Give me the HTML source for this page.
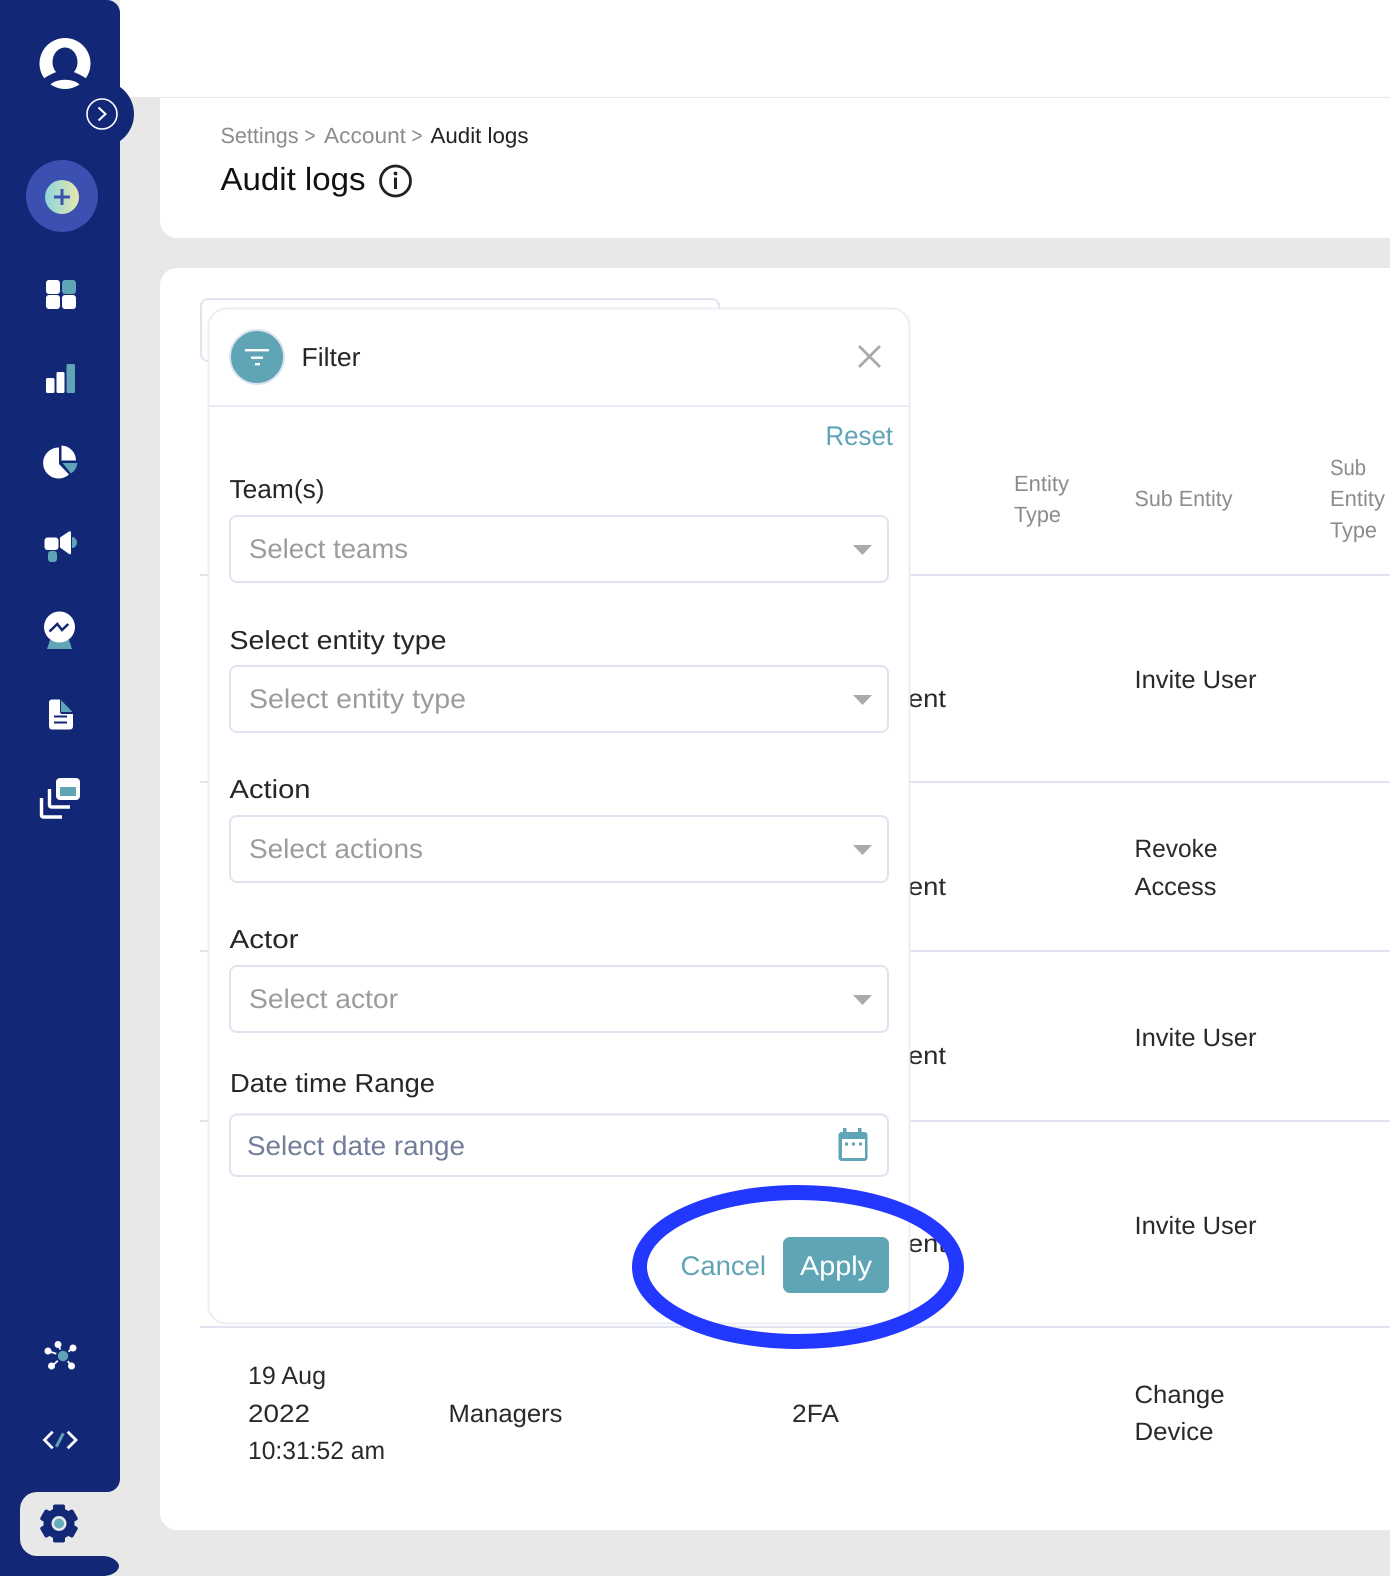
<!DOCTYPE html>
<html lang="en">
<head>
<meta charset="utf-8">
<title>Audit logs</title>
<style>
html,body{margin:0;padding:0;background:#e8e8e8;width:1390px;height:1576px;overflow:hidden}
svg{display:block}
text{font-family:"Liberation Sans",Arial,sans-serif;text-rendering:geometricPrecision}
.h{fill:#8c8c8c;font-size:22px}
.c{fill:#2a2a2a;font-size:25px}
.l{fill:#262626;font-size:26px}
.p{fill:#9c9c9c;font-size:27px}
.t{fill:#5fa5b6;font-size:27px}
.f{fill:none;stroke:#dfe3f0;stroke-width:2}
</style>
</head>
<body>
<svg width="1390" height="1576" viewBox="0 0 1390 1576" xmlns="http://www.w3.org/2000/svg">
<defs>
<linearGradient id="g" x1="0" x2="1" y1="0" y2="0"><stop offset="0" stop-color="#8ed5da"/><stop offset="1" stop-color="#e8e8ae"/></linearGradient>
</defs>
<!-- page -->
<rect width="1390" height="1576" fill="#e8e8e8"/>
<rect x="120" y="0" width="1270" height="97" fill="#fff"/>
<path d="M160 98H1390V238H177A17 17 0 0 1 160 221Z" fill="#fff"/>
<path d="M177 268H1390V1530H177A17 17 0 0 1 160 1513V285A17 17 0 0 1 177 268Z" fill="#fff"/>

<!-- heading -->
<text x="220.500" y="143" class="h" textLength="78" lengthAdjust="spacingAndGlyphs">Settings</text>
<text x="304.500" y="143" class="h" textLength="11" lengthAdjust="spacingAndGlyphs">&gt;</text>
<text x="324" y="143" class="h" textLength="82" lengthAdjust="spacingAndGlyphs">Account</text>
<text x="411.500" y="143" class="h" textLength="11" lengthAdjust="spacingAndGlyphs">&gt;</text>
<text x="430.500" y="143" style="fill:#222;font-size:22px" textLength="98" lengthAdjust="spacingAndGlyphs">Audit logs</text>
<text x="220.500" y="190" style="fill:#111;font-size:32px" textLength="145" lengthAdjust="spacingAndGlyphs">Audit logs</text>
<circle cx="395.500" cy="181" r="15" fill="none" stroke="#222" stroke-width="2.800"/>
<circle cx="395.500" cy="173.500" r="1.900" fill="#222"/>
<rect x="394" y="177.500" width="3" height="11.500" fill="#222"/>

<!-- table behind -->
<rect x="201" y="299" width="518" height="62" rx="7" class="f"/>
<g fill="#dfe3f0">
<rect x="200" y="574" width="1190" height="2"/>
<rect x="200" y="781" width="1190" height="2"/>
<rect x="200" y="950" width="1190" height="2"/>
<rect x="200" y="1120" width="1190" height="2"/>
<rect x="200" y="1326" width="1190" height="2"/>
</g>
<text x="1014" y="491" class="h" textLength="55" lengthAdjust="spacingAndGlyphs">Entity</text>
<text x="1014" y="522" class="h" textLength="47" lengthAdjust="spacingAndGlyphs">Type</text>
<text x="1134.500" y="506" class="h" textLength="98" lengthAdjust="spacingAndGlyphs">Sub Entity</text>
<text x="1330" y="475" class="h" textLength="36" lengthAdjust="spacingAndGlyphs">Sub</text>
<text x="1330" y="506" class="h" textLength="55" lengthAdjust="spacingAndGlyphs">Entity</text>
<text x="1330" y="537.500" class="h" textLength="47" lengthAdjust="spacingAndGlyphs">Type</text>

<text x="885" y="707" class="c" textLength="61" lengthAdjust="spacingAndGlyphs">ment</text>
<text x="885" y="895" class="c" textLength="61" lengthAdjust="spacingAndGlyphs">ment</text>
<text x="885" y="1064" class="c" textLength="61" lengthAdjust="spacingAndGlyphs">ment</text>
<text x="885" y="1252" class="c" textLength="61" lengthAdjust="spacingAndGlyphs">ment</text>

<text x="1134.500" y="688" class="c" textLength="122" lengthAdjust="spacingAndGlyphs">Invite User</text>
<text x="1134.500" y="857" class="c" textLength="83" lengthAdjust="spacingAndGlyphs">Revoke</text>
<text x="1134.500" y="895" class="c" textLength="82" lengthAdjust="spacingAndGlyphs">Access</text>
<text x="1134.500" y="1046" class="c" textLength="122" lengthAdjust="spacingAndGlyphs">Invite User</text>
<text x="1134.500" y="1234" class="c" textLength="122" lengthAdjust="spacingAndGlyphs">Invite User</text>
<text x="1134.500" y="1403" class="c" textLength="90" lengthAdjust="spacingAndGlyphs">Change</text>
<text x="1134.500" y="1440" class="c" textLength="79" lengthAdjust="spacingAndGlyphs">Device</text>
<text x="248" y="1384" class="c" textLength="78" lengthAdjust="spacingAndGlyphs">19 Aug</text>
<text x="248" y="1422" class="c" textLength="62" lengthAdjust="spacingAndGlyphs">2022</text>
<text x="248" y="1459" class="c" textLength="137" lengthAdjust="spacingAndGlyphs">10:31:52 am</text>
<text x="448.500" y="1422" class="c" textLength="114" lengthAdjust="spacingAndGlyphs">Managers</text>
<text x="792" y="1422" class="c" textLength="47" lengthAdjust="spacingAndGlyphs">2FA</text>

<!-- modal -->
<rect x="208.500" y="308.500" width="701" height="1015" rx="18" fill="#fff" stroke="#eceef6" stroke-width="2"/>
<rect x="209" y="405" width="700" height="2" fill="#e9ebf4"/>
<circle cx="257" cy="357" r="27" fill="#5fa5b6" stroke="#dfe3f0" stroke-width="2"/>
<g fill="#fff"><rect x="245" y="349" width="24" height="2.400"/><rect x="251" y="356.500" width="12" height="2.400"/><rect x="255" y="363" width="5" height="2.400"/></g>
<text x="301.500" y="366" class="l" textLength="59" lengthAdjust="spacingAndGlyphs">Filter</text>
<path d="M859 346L880 367M880 346L859 367" stroke="#aaa" stroke-width="2.800" fill="none"/>
<text x="825.500" y="445" class="t" textLength="67.500" lengthAdjust="spacingAndGlyphs">Reset</text>

<text x="229.500" y="498" class="l" textLength="95" lengthAdjust="spacingAndGlyphs">Team(s)</text>
<rect x="230" y="516" width="658" height="66" rx="7" class="f"/>
<text x="249" y="558" class="p" textLength="159" lengthAdjust="spacingAndGlyphs">Select teams</text>
<path d="M853 545H872L862.500 555Z" fill="#aaa"/>

<text x="229.500" y="649" class="l" textLength="217" lengthAdjust="spacingAndGlyphs">Select entity type</text>
<rect x="230" y="666" width="658" height="66" rx="7" class="f"/>
<text x="249" y="708" class="p" textLength="217" lengthAdjust="spacingAndGlyphs">Select entity type</text>
<path d="M853 695H872L862.500 705Z" fill="#aaa"/>

<text x="229.500" y="798" class="l" textLength="81" lengthAdjust="spacingAndGlyphs">Action</text>
<rect x="230" y="816" width="658" height="66" rx="7" class="f"/>
<text x="249" y="858" class="p" textLength="174" lengthAdjust="spacingAndGlyphs">Select actions</text>
<path d="M853 845H872L862.500 855Z" fill="#aaa"/>

<text x="229.500" y="948" class="l" textLength="69" lengthAdjust="spacingAndGlyphs">Actor</text>
<rect x="230" y="966" width="658" height="66" rx="7" class="f"/>
<text x="249" y="1008" class="p" textLength="149" lengthAdjust="spacingAndGlyphs">Select actor</text>
<path d="M853 995H872L862.500 1005Z" fill="#aaa"/>

<text x="230" y="1092" class="l" textLength="205" lengthAdjust="spacingAndGlyphs">Date time Range</text>
<rect x="230" y="1114.500" width="658" height="61.500" rx="7" class="f"/>
<text x="247" y="1155" class="p" style="fill:#737d99" textLength="218" lengthAdjust="spacingAndGlyphs">Select date range</text>
<g fill="#5fa5b6">
<path d="M843 1128h3.500v4h11.500v-4h3.500v4h3a3 3 0 0 1 3 3v23a3 3 0 0 1-3 3h-23a3 3 0 0 1-3-3v-23a3 3 0 0 1 3-3h1.500ZM842 1139v19h23v-19Z" fill-rule="evenodd"/>
<rect x="845" y="1142.500" width="3" height="3"/><rect x="852" y="1142.500" width="3" height="3"/><rect x="859" y="1142.500" width="3" height="3"/>
</g>

<text x="680.500" y="1275" class="t" textLength="85.500" lengthAdjust="spacingAndGlyphs">Cancel</text>
<rect x="783" y="1237" width="106" height="56" rx="7" fill="#5fa5b6"/>
<text x="800" y="1275" style="fill:#fff;font-size:27px" textLength="72" lengthAdjust="spacingAndGlyphs">Apply</text>

<ellipse cx="798" cy="1267" rx="158.500" ry="74.500" fill="none" stroke="#2338ff" stroke-width="15"/>

<!-- sidebar -->
<path d="M0 0H107A13 13 0 0 1 120 13V1479A13 13 0 0 1 107 1492H37A17 17 0 0 0 20 1509V1539A17 17 0 0 0 37 1556H103C112 1556 119 1562 119 1566C119 1571 112 1576 103 1576H0Z" fill="#132777"/>
<circle cx="101" cy="114" r="33" fill="#132777"/>

<!-- avatar -->
<circle cx="65" cy="63.500" r="25.500" fill="#fff"/>
<ellipse cx="65" cy="62" rx="12.500" ry="14.500" fill="#132777"/>
<path d="M42 80C48 75 54 73 59 71H71C76 73 82 75 88 80L80 85C74 78 56 78 50 85Z" fill="#132777"/>
<circle cx="102" cy="114" r="15" fill="none" stroke="#fff" stroke-width="1.600"/>
<path d="M98.500 107.500L105.500 114L98.500 120.500" fill="none" stroke="#fff" stroke-width="2"/>

<!-- add -->
<circle cx="62" cy="196" r="36" fill="#3b50b0"/>
<circle cx="62" cy="197" r="17" fill="url(#g)"/>
<path d="M62 189V205M54 197H70" stroke="#3b50b0" stroke-width="3" fill="none"/>

<!-- dashboard -->
<g fill="#fff">
<rect x="46" y="280" width="14" height="14" rx="3"/>
<rect x="46" y="295" width="14" height="14" rx="3"/>
<rect x="62" y="295" width="14" height="14" rx="3"/>
</g>
<rect x="62" y="280" width="14" height="14" rx="3" fill="#5fa5b6"/>

<!-- bars -->
<rect x="46" y="378" width="8.500" height="15" rx="1.500" fill="#fff"/>
<rect x="56.500" y="372" width="8" height="21" rx="1.500" fill="#fff"/>
<rect x="66.500" y="364" width="8.500" height="29" rx="1.500" fill="#5fa5b6"/>

<!-- pie -->
<path d="M59 447.500A15.500 15.500 0 1 0 69 474.500L59 464Z" fill="#fff"/>
<path d="M61.500 445.500A15 15 0 0 1 76 460.500H61.500Z" fill="#fff"/>
<path d="M62.500 463H77.500A15 15 0 0 1 71 473.500Z" fill="#5fa5b6"/>

<!-- megaphone -->
<rect x="44.500" y="537.500" width="14" height="12.500" rx="3" fill="#fff"/>
<path d="M60 537.500L69 531.500Q71 530.500 71 533V553Q71 555 69 554L60 547.500Z" fill="#fff"/>
<path d="M72 537A5 5.500 0 0 1 72 548Z" fill="#5fa5b6"/>
<rect x="48" y="551" width="9" height="11" rx="3" fill="#5fa5b6"/>

<!-- crystal ball -->
<path d="M50 640H69L72 649H47Z" fill="#5fa5b6"/>
<circle cx="59.500" cy="627" r="15.500" fill="#fff"/>
<path d="M49.500 631.500L57.300 624L62 630L68.300 624" fill="none" stroke="#132777" stroke-width="2.500"/>

<!-- doc -->
<path d="M52 699.500H60V711Q60 714 62 714H73V726Q73 729.500 70 729.500H52Q49 729.500 49 726V702.500Q49 699.500 52 699.500Z" fill="#fff"/>
<path d="M61 700L72.500 712H61Z" fill="#5fa5b6"/>
<path d="M54 716.500H67M54 722.500H67" stroke="#132777" stroke-width="2" fill="none"/>

<!-- layers -->
<path d="M49.500 789V805Q49.500 807 52 807H70" fill="none" stroke="#fff" stroke-width="3.400"/>
<path d="M41.500 798V815Q41.500 817 44 817H62" fill="none" stroke="#fff" stroke-width="3.400"/>
<rect x="56" y="778" width="24" height="22" rx="4" fill="#fff"/>
<rect x="60" y="787" width="16" height="9" fill="#5fa5b6"/>

<!-- network -->
<g stroke="#fff" stroke-width="1.800"><path d="M63 1356L58 1344M63 1356L73 1348M63 1356L48 1351M63 1356L52 1366M63 1356L72 1366"/></g>
<g fill="#fff"><circle cx="58" cy="1344.500" r="3.500"/><circle cx="73" cy="1348" r="3.500"/><circle cx="48" cy="1351" r="3.500"/><circle cx="51.500" cy="1366" r="3.500"/><circle cx="71.500" cy="1366" r="3.500"/></g>
<circle cx="63" cy="1356" r="7" fill="#132777"/>
<circle cx="63" cy="1356" r="5.200" fill="#5fa5b6"/>

<!-- code -->
<path d="M52.700 1431.700L44.500 1440L52.700 1448.300M67.700 1431.700L76 1440L67.700 1448.300" fill="none" stroke="#fff" stroke-width="2.800"/>
<path d="M63.300 1433.300L56.300 1446.700" stroke="#5fa5b6" stroke-width="3" fill="none"/>

<!-- gear -->
<g fill="#132777">
<circle cx="59" cy="1523.500" r="15.500"/>
<rect x="53" y="1504.500" width="12" height="38" rx="2"/>
<rect x="53" y="1504.500" width="12" height="38" rx="2" transform="rotate(60 59 1523.500)"/>
<rect x="53" y="1504.500" width="12" height="38" rx="2" transform="rotate(120 59 1523.500)"/>
</g>
<circle cx="59" cy="1523.500" r="7.500" fill="#e8e8e8"/>
<circle cx="59" cy="1523.500" r="5" fill="#63adbd"/>
</svg>
</body>
</html>
